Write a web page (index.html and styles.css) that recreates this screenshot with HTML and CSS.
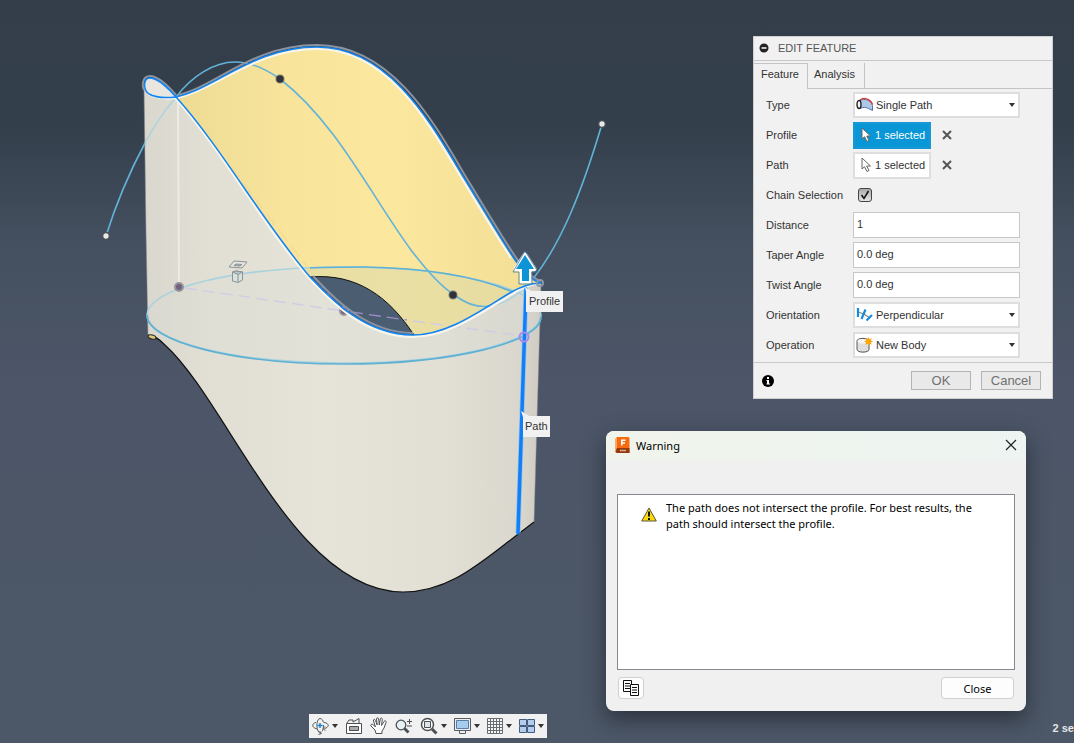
FILE: index.html
```html
<!DOCTYPE html>
<html lang="en">
<head>
    <meta charset="UTF-8">
    <meta name="viewport" content="width=device-width, initial-scale=1.0">
    <title>Edit Feature</title>
    <link rel="stylesheet" href="styles.css">
</head>
<body>
    <main class="viewport">
        <!-- Model canvas -->
        <div class="canvas">
            <svg class="model" width="640" height="620" viewBox="0 0 640 620" fill="none">
                <defs>
                    <linearGradient id="body-fill" gradientUnits="userSpaceOnUse" x1="144" y1="0" x2="541" y2="0">
                        <stop offset="0" stop-color="#dad7ce"/>
                        <stop offset="0.15" stop-color="#e1dfd4"/>
                        <stop offset="0.45" stop-color="#e6e4d8"/>
                        <stop offset="0.75" stop-color="#e2e0d4"/>
                        <stop offset="0.94" stop-color="#dad8ce"/>
                        <stop offset="1" stop-color="#d0cbc4"/>
                    </linearGradient>
                    <linearGradient id="inner-fill" gradientUnits="userSpaceOnUse" x1="177" y1="0" x2="535" y2="0">
                        <stop offset="0" stop-color="#eddb95"/>
                        <stop offset="0.3" stop-color="#f8e49b"/>
                        <stop offset="0.6" stop-color="#fce79e"/>
                        <stop offset="1" stop-color="#f2de94"/>
                    </linearGradient>
                    <clipPath id="inner-clip">
                        <path d="M176 97C217 88 254 47 317 47C391 47 433 127 464 178C480 204 500 238 513 257C521 270 532 281 541 283C533 283 521 286 508 294C477 313 446 335 413 335C363 335 327 295 310 277C262 221 222 148 176 97Z"/>
                    </clipPath>
                    <clipPath id="front-clip">
                        <path d="M144 84C145 96 164 100 176 97C222 148 262 221 310 277C327 295 363 335 413 335C446 335 477 313 508 294C521 286 533 283 541 283L534 522L517 535C480 561 449 592 403 592C297 592 228 402 165 345L148 335Z"/>
                    </clipPath>
                </defs>

                <path fill="url(#body-fill)" d="M144 84C145 96 164 100 176 97C222 148 262 221 310 277C327 295 363 335 413 335C446 335 477 313 508 294C521 286 533 283 541 283L534 522L517 535C480 563 449 592 403 592C295 592 228 402 165 345C159 339 155 336 148 335L146 230Z"/>
                <path fill="#e8e6de" d="M176 97C170 90 158 78 150 78C143 78 143 90 149 94C156 98 167 98 176 97Z"/>
                <path fill="url(#inner-fill)" d="M176 97C217 88 254 47 317 47C391 47 433 127 464 178C480 204 500 238 513 257C521 270 532 281 541 283C533 283 521 286 508 294C477 313 446 335 413 335C363 335 327 295 310 277C262 221 222 148 176 97Z"/>
                <g clip-path="url(#inner-clip)">
                    <ellipse cx="344" cy="315" rx="197" ry="48" fill="#dddba9" fill-opacity="0.6"/>
                    <path fill="#4b5d70" stroke="#111" d="M310 277C357 273 389 297 414 335C363 338 327 295 310 277Z"/>
                    <path stroke="#f3cc86" stroke-opacity="0.7" stroke-dasharray="14 6" d="M230 166L335 303"/>
                </g>
                <ellipse cx="344" cy="315" rx="197" ry="48" fill="#d8dbd6" fill-opacity="0.25" clip-path="url(#front-clip)"/>

                <!-- outer edges -->
                <path stroke="#8d9091" stroke-opacity="0.5" d="M144 90L146 230L148 335M541 286L534 522"/>
                <path stroke="#111" stroke-width="1.2" d="M148 335C155 336 159 339 165 345C228 402 295 592 403 592C449 592 480 563 517 535L534 522"/>
                <ellipse cx="152" cy="337" rx="4" ry="2" fill="#dccb76" stroke="#222" transform="rotate(15 152 337)"/>
                <path stroke="#ecebe4" stroke-width="2" d="M178 101L179 284"/>
                <path stroke="#ead9c9" stroke-opacity="0.6" stroke-dasharray="12 5" d="M365 330L517 530"/>

                <!-- sketch circle and spline -->
                <ellipse cx="344" cy="315" rx="197" ry="48" stroke="#a9d2df" stroke-width="1.6"/>
                <path stroke="#5fb0d2" stroke-width="1.7" d="M310 268C325 267 345 267 364 267C425 268 478 277 513 292M147 315C147 342 235 364 344 364C453 364 541 342 541 317"/>
                <path stroke="#63b3d9" stroke-width="1.6" d="M106 236C115 207 128 175 145 143M176 97C192 76 214 62 235 62C251 62 266 69 280 79C337 123 373 199 411 250C424 267 439 285 453 294C465 303 476 308 490 306M533 279C562 242 582 191 602 124"/>
                <path stroke="#afd3de" stroke-width="1.6" d="M145 143C155 124 166 109 176 97M490 306C506 304 520 294 533 279"/>
                <path stroke="#d2cae5" stroke-width="1.3" stroke-dasharray="12 6" d="M185 288L344 311M413 321L524 336"/>
                <path stroke="#9e8cc9" stroke-width="1.3" stroke-dasharray="12 6" d="M351 312L407 320"/>
                <g fill="#71647c" stroke="#97949c" stroke-width="2">
                    <circle cx="179" cy="287" r="4"/>
                    <circle cx="344" cy="311" r="4"/>
                </g>

                <!-- selected profile -->
                <path stroke="#8a93a0" stroke-width="2" d="M178 95C217 86 252 45 317 45C393 45 436 126 466 177C482 203 502 237 515 256C523 269 533 279 541 281M176 95C170 88 158 76 150 76C142 76 142 86 144 90M313 276C329 293 364 333 413 333"/>
                <path stroke="#f8f6ed" stroke-width="2" d="M177 98C218 89 255 49 317 49C390 49 431 128 462 179C478 205 498 239 511 258M148 94C157 99 167 99 175 98C221 149 260 222 309 278C326 296 361 337 413 337C447 337 478 315 509 296C521 288 532 284 537 284"/>
                <path stroke="#1285f5" stroke-width="1.5" d="M176 97C217 88 254 47 317 47C391 47 433 127 464 178C480 204 500 238 513 257C521 270 532 281 541 283C533 283 521 286 508 294C477 313 446 335 413 335C363 335 327 295 310 277C262 221 222 148 176 97C170 90 158 78 150 78C143 78 143 90 149 94C156 98 167 98 176 97Z"/>
                <circle cx="540" cy="283" r="3" stroke="#8798aa" stroke-width="2"/>

                <!-- selected path -->
                <path stroke="#9bc2e8" stroke-width="5" d="M526 290L518 533"/>
                <path stroke="#1180f8" stroke-width="3.5" stroke-linecap="round" d="M526 289L518 533"/>
                <circle cx="524" cy="337" r="4.5" stroke="#a78aeb" stroke-width="2"/>
                <path fill="#0d94d6" stroke="#fff" stroke-width="5" paint-order="stroke" stroke-linejoin="round" d="M525 255L534 269H529V281H522V269H516Z"/>
                <path stroke="#48789a" stroke-opacity="0.8" d="M525 251L538 272H532V284H519V272H513Z"/>

                <g stroke="#494e51" stroke-width="1.3">
                    <circle cx="106" cy="236" r="3.3" fill="#e7e9ea"/>
                    <circle cx="602" cy="124" r="3.3" fill="#e7e9ea"/>
                </g>
                <g fill="#303337" stroke="#777" stroke-opacity="0.6" stroke-width="1.4">
                    <circle cx="280" cy="79" r="4"/>
                    <circle cx="453" cy="295" r="4"/>
                </g>

                <!-- constraint glyphs -->
                <g stroke="#8c9394">
                    <path fill="#e6e6df" d="M234 261L247 262L242 268L229 267Z"/>
                    <path fill="#aebbc1" d="M236 264L242 264.500L240 266L234 265.500Z"/>
                    <path fill="#d9e1de" d="M232.500 272L236 271L242.500 272V280L238 282.500L232.500 281Z"/>
                    <path fill="#b0c9cf" d="M232.500 272L236 271L242.500 272L238 274.500ZM238 274.500V282"/>
                </g>
                <path fill="#f1f1f1" d="M525 287L533 292H526ZM521 411L531 417H523Z"/>
            </svg>
            <span class="tag tag-profile">Profile</span>
            <span class="tag tag-path">Path</span>
        </div>

        <!-- Edit feature panel -->
        <form class="panel">
            <header class="panel-header">
                <button type="button" class="icon-button" aria-label="Collapse">
                    <svg width="10" height="10" viewBox="0 0 10 10"><circle cx="5" cy="5" r="4.5" fill="#222"/><path d="M2.500 5H7.500" stroke="#fff" stroke-width="1.5"/></svg>
                </button>
                <h1>EDIT FEATURE</h1>
            </header>
            <nav class="tabs">
                <button type="button" class="tab active">Feature</button>
                <button type="button" class="tab">Analysis</button>
            </nav>
            <div class="fields">
                <div class="field">
                    <label for="type">Type</label>
                    <div class="combo">
                        <svg width="18" height="16" viewBox="0 0 18 16" fill="none">
                            <path d="M4 3.500C8 1 15 3 16.500 8.500V13.500L12.500 11.500C10 10 7 10 4 11.500Z" fill="#afc8ea" stroke="#5273aa"/>
                            <path d="M4 3C7 0.500 14 1 16.500 7.500" stroke="#d3433c" stroke-width="1.5"/>
                            <ellipse cx="3" cy="7.500" rx="2" ry="4" fill="#f3f3f3" stroke="#222" stroke-width="1.4"/>
                        </svg>
                        <select id="type"><option>Single Path</option></select>
                    </div>
                </div>
                <div class="field">
                    <span class="name">Profile</span>
                    <button type="button" class="pick selected">
                        <svg width="12" height="16" viewBox="0 0 12 16"><path d="M2 1L2 12L4.500 9.700L7 14.500L9 13.500L6.700 9H10.500Z" fill="#fff" stroke="#666"/></svg>
                        1 selected
                    </button>
                    <button type="button" class="icon-button clear" aria-label="Clear profile">
                        <svg width="10" height="10" viewBox="0 0 10 10"><path d="M1 1L9 9M9 1L1 9" stroke="#555" stroke-width="2"/></svg>
                    </button>
                </div>
                <div class="field">
                    <span class="name">Path</span>
                    <button type="button" class="pick">
                        <svg width="12" height="16" viewBox="0 0 12 16"><path d="M2 1L2 12L4.500 9.700L7 14.500L9 13.500L6.700 9H10.500Z" fill="#fff" stroke="#666"/></svg>
                        1 selected
                    </button>
                    <button type="button" class="icon-button clear" aria-label="Clear path">
                        <svg width="10" height="10" viewBox="0 0 10 10"><path d="M1 1L9 9M9 1L1 9" stroke="#555" stroke-width="2"/></svg>
                    </button>
                </div>
                <div class="field">
                    <label for="chain">Chain Selection</label>
                    <span class="check">
                        <input type="checkbox" id="chain" checked>
                        <svg width="14" height="14" viewBox="0 0 14 14"><path d="M3.500 7L6 10.500L10.500 3" fill="none" stroke="#111" stroke-width="1.5"/></svg>
                    </span>
                </div>
                <div class="field">
                    <label for="distance">Distance</label>
                    <input type="text" id="distance" value="1">
                </div>
                <div class="field">
                    <label for="taper">Taper Angle</label>
                    <input type="text" id="taper" value="0.0 deg">
                </div>
                <div class="field">
                    <label for="twist">Twist Angle</label>
                    <input type="text" id="twist" value="0.0 deg">
                </div>
                <div class="field">
                    <label for="orientation">Orientation</label>
                    <div class="combo">
                        <svg width="18" height="16" viewBox="0 0 18 16" fill="none">
                            <path d="M2 5L8 7L14 11" stroke="#888" stroke-width="1.3"/>
                            <path d="M2 1V10M9.500 2.500L5.500 12M16 8L10.500 13.500" stroke="#168be0" stroke-width="2.2"/>
                        </svg>
                        <select id="orientation"><option>Perpendicular</option></select>
                    </div>
                </div>
                <div class="field">
                    <label for="operation">Operation</label>
                    <div class="combo">
                        <svg width="18" height="16" viewBox="0 0 18 16">
                            <path d="M1 4C1 0.500 13 0.500 13 4V12.500C13 16 1 16 1 12.500Z" fill="#dedede" stroke="#555"/>
                            <ellipse cx="7" cy="4.200" rx="5.300" ry="2.300" fill="#f5f5f5"/>
                            <path d="M12.500 0L13.500 2.200L15.800 1.300L14.900 3.500L17 4.500L14.900 5.400L15.800 7.700L13.500 6.800L12.500 9L11.500 6.800L9.200 7.700L10.100 5.400L8 4.500L10.100 3.500L9.200 1.300L11.500 2.200Z" fill="#fca60e"/>
                        </svg>
                        <select id="operation"><option>New Body</option></select>
                    </div>
                </div>
            </div>
            <footer class="panel-footer">
                <button type="button" class="icon-button info" aria-label="Information">
                    <svg width="12" height="12" viewBox="0 0 12 12"><circle cx="6" cy="6" r="6" fill="#000"/><path d="M5 2H7V4H5ZM4.500 5H7V8.500H8V9.500H4.500V8.500H5V6H4.500Z" fill="#fff"/></svg>
                </button>
                <button type="button" class="action">OK</button>
                <button type="button" class="action">Cancel</button>
            </footer>
        </form>

        <!-- Warning dialog -->
        <section class="dialog" role="dialog" aria-labelledby="dialog-title">
            <header class="dialog-header">
                <svg width="15" height="16" viewBox="0 0 15 16">
                    <path d="M2 0H13.500L14.500 1V16H2L0.500 15V2Z" fill="#f76b10"/>
                    <path d="M0.500 2L2 0V11L0.500 14Z" fill="#ffa35c"/>
                    <path d="M2 11H14.500V16H2L0.500 15Z" fill="#933b0c"/>
                    <path d="M6.800 8.500V3.200H10.500M6.800 5.900H10" fill="none" stroke="#fff" stroke-width="1.5"/>
                    <path d="M5 13.500H11" stroke="#f0c9b0" stroke-width="1.5" stroke-dasharray="1.600 0.500"/>
                </svg>
                <h2 id="dialog-title">Warning</h2>
                <button type="button" class="icon-button" aria-label="Close dialog">
                    <svg width="12" height="12" viewBox="0 0 12 12"><path d="M1 1L11 11M11 1L1 11" stroke="#222" stroke-width="1.2"/></svg>
                </button>
            </header>
            <div class="message">
                <svg width="16" height="15" viewBox="0 0 16 15">
                    <path d="M8 1L15.300 14H0.700Z" fill="#fbd90c" stroke="#5b563b" stroke-linejoin="round"/>
                    <path d="M8 4.500V9.500M8 11V13" stroke="#111" stroke-width="2"/>
                </svg>
                <p>The path does not intersect the profile. For best results, the path should intersect the profile.</p>
            </div>
            <footer class="dialog-footer">
                <button type="button" class="copy" aria-label="Copy message">
                    <svg width="16" height="16" viewBox="0 0 16 16" fill="#fff" stroke="#111"><path d="M0.500 0.500H8.500V11.500H0.500ZM2 3.500H7M2 6H7M2 8.500H7"/><path d="M7.500 4.500H15.500V15.500H7.500ZM9 7.500H14M9 10H14M9 12.500H14"/></svg>
                </button>
                <button type="button" class="close">Close</button>
            </footer>
        </section>

        <!-- Navigation bar -->
        <div class="navbar">
            <button type="button" class="tool menu" aria-label="Orbit">
                <svg width="17" height="18" viewBox="0 0 17 18" fill="none" stroke="#555b60"><path d="M9 16.500C4 16 3.500 2 8 1.500C10 1.500 11 3.500 11.500 5.500M6.500 17.500L9.500 16.500L7.500 14"/><path d="M5 12C-1 10.500 0 6 4 5.500M12 5.500C17.500 6 17.500 10.500 12.500 11.500M13 9.500L11 11.700L13.500 13.500"/><path d="M11.500 8C11.500 11 11 13 10 14.500"/><path d="M8 6V11M5.500 8.500H10.500" stroke="#1680cf" stroke-width="1.4"/></svg>
            </button>
            <button type="button" class="tool" aria-label="Look at">
                <svg width="18" height="18" viewBox="0 0 18 18" fill="none" stroke="#4b5054"><path d="M1.500 6.500H16.500V16.500H1.500Z" fill="#fff"/><path d="M4.500 9.500H13.500V13.500H4.500Z" fill="#aaa"/><path d="M2 6L4 3H8V5L14 1.500V6"/></svg>
            </button>
            <button type="button" class="tool" aria-label="Pan">
                <svg width="18" height="18" viewBox="0 0 18 18" fill="#fff" stroke="#4b5054" stroke-linejoin="round"><path d="M6 16.500L5 13L1 9C0 7.500 2 6.500 3.500 8L5.500 10L3.500 4C3 2 5 2 5.500 3.500L7.200 8L6.500 2C6.500 0.500 8.500 0.500 8.700 2L9.300 8L10.300 2C10.800 0.500 12.500 1 12.300 2.500L11.500 8.500L14 4.500C15 3 16.500 4 16 5.500L14 11L12 14V16.500Z"/></svg>
            </button>
            <button type="button" class="tool" aria-label="Zoom">
                <svg width="18" height="18" viewBox="0 0 18 18" fill="none" stroke="#4b5054"><circle cx="6" cy="8" r="4.800" fill="#e6f2f3" stroke-width="1.3"/><path d="M9.500 11.500L13.500 15.500" stroke-width="3"/><path d="M14.500 2V7M12 4.500H17M12 9H17"/></svg>
            </button>
            <button type="button" class="tool menu" aria-label="Zoom window">
                <svg width="18" height="18" viewBox="0 0 18 18" fill="none" stroke="#4b5054"><circle cx="7.500" cy="7.500" r="6" fill="#fff" stroke-width="1.5"/><path d="M4.500 4.500H10.500V10.500H4.500Z" fill="#dce5e8"/><path d="M12 12L16.500 16.500" stroke-width="3"/></svg>
            </button>
            <button type="button" class="tool menu" aria-label="Display settings">
                <svg width="17" height="16" viewBox="0 0 17 16" stroke="#555d64"><path d="M0.500 0.500H16.500V12.500H0.500Z" fill="#eee"/><path d="M2.500 2.500H14.500V10.500H2.500Z" fill="#a7cbed" stroke="#587da6"/><path d="M5.500 12.500V15.500H11.500V12.500" fill="none"/></svg>
            </button>
            <button type="button" class="tool menu" aria-label="Grid and snaps">
                <svg width="16" height="16" viewBox="0 0 16 16"><path d="M0.500 0.500H15.500V15.500H0.500ZM3.500 0V16M6.500 0V16M9.500 0V16M12.500 0V16M0 3.500H16M0 6.500H16M0 9.500H16M0 12.500H16" fill="#f8f8f8" stroke="#676c70"/></svg>
            </button>
            <button type="button" class="tool menu" aria-label="Viewports">
                <svg width="16" height="14" viewBox="0 0 16 14" fill="#b1cdeb" stroke="#445b7d"><path d="M0.500 0.500H7.500V6.500H0.500ZM8.500 0.500H15.500V6.500H8.500ZM0.500 7.500H7.500V13.500H0.500ZM8.500 7.500H15.500V13.500H8.500Z"/></svg>
            </button>
        </div>
        <div class="status">2 se</div>
    </main>
</body>
</html>
```
FILE: styles.css
```css
* {
    box-sizing: border-box;
}
body {
    margin: 0;
    font-family: "Liberation Sans", Arial, sans-serif;
    font-size: 11px;
    color: #333;
}
button, input, select {
    font: inherit;
    color: inherit;
}
svg {
    display: block;
    flex: none;
}
h1, h2, p {
    margin: 0;
    font-weight: normal;
}
.viewport {
    position: relative;
    height: 100vh;
    overflow: hidden;
    background: linear-gradient(#343e4b 0%, #343f4c 17%, #444f5f 32%, #4c5668 52%, #4c5767 100%);
}

/* Canvas */
.canvas {
    position: absolute;
    top: 0;
    left: 0;
}
.tag {
    position: absolute;
    padding: 0 3px;
    line-height: 21px;
    background: #f1f1f1;
}
.tag-profile {
    left: 526px;
    top: 291px;
}
.tag-path {
    left: 523px;
    top: 416px;
    padding: 0 2px;
}

/* Panel */
.panel {
    position: absolute;
    top: 36px;
    right: 21px;
    width: 300px;
    background: #f1f1f1;
    border: 1px solid #cfcfcf;
}
.icon-button {
    display: flex;
    padding: 0;
    border: 0;
    background: none;
}
.panel-header {
    display: flex;
    align-items: center;
    gap: 9px;
    height: 24px;
    padding: 0 5px 1px;
    border-bottom: 1px solid #c8c8c8;
}
.panel-header h1 {
    font-size: 11px;
    color: #555;
}
.tabs {
    display: flex;
    height: 28px;
    padding-top: 2px;
    border-bottom: 1px solid #c4c4c4;
}
.tab {
    padding: 0 9px 3px 6px;
    background: #f1f1f1;
    border: 0;
    border-right: 1px solid #c4c4c4;
}
.tab.active {
    margin-bottom: -1px;
    padding: 0 8px 5px 7px;
    border-top: 1px solid #c4c4c4;
}
.fields {
    padding: 1px 32px 2px 12px;
}
.field {
    display: grid;
    grid-template-columns: 87px auto 1fr;
    align-items: center;
    height: 30px;
}
.combo, .field input[type="text"] {
    grid-column: 2 / 4;
    width: 100%;
    height: 26px;
    background: #fff;
    border: 1px solid #c8c8c8;
}
.combo {
    position: relative;
    display: flex;
    align-items: center;
    padding-left: 1px;
    border: 2px solid #dedede;
}
.combo select {
    flex: 1;
    height: 22px;
    padding: 0 2px;
    background: none;
    border: 0;
    appearance: none;
}
.combo::after {
    content: "";
    position: absolute;
    right: 3px;
    border: 3px solid transparent;
    border-top: 4px solid #333;
    border-bottom: 0;
    pointer-events: none;
}
.field input[type="text"] {
    padding: 0 3px 2px;
}
.pick {
    display: flex;
    align-items: center;
    gap: 3px;
    height: 27px;
    padding: 0 4px 0 5px;
    background: #fff;
    border: 2px solid #dedede;
}
.pick.selected {
    color: #fff;
    background: #0896d7;
    border-color: #1797d4;
}
.clear {
    margin-left: 11px;
}
.check {
    position: relative;
    width: 14px;
    margin-left: 5px;
}
.check input {
    display: block;
    width: 14px;
    height: 14px;
    margin: 0;
    appearance: none;
    background: linear-gradient(#aaa, #e6e6e6);
    border: 1px solid #444;
    border-radius: 3px;
}
.check svg {
    position: absolute;
    top: 0;
    left: 0;
    visibility: hidden;
    pointer-events: none;
}
.check input:checked + svg {
    visibility: visible;
}
.panel-footer {
    display: flex;
    align-items: center;
    gap: 10px;
    height: 36px;
    padding: 0 11px 0 8px;
    border-top: 1px solid #c8c8c8;
}
.info {
    margin-right: auto;
}
.action {
    width: 60px;
    height: 19px;
    padding: 0;
    font-size: 13px;
    line-height: 16px;
    color: #707070;
    background: #e9e9e9;
    border: 1px solid #b4b4b4;
}

/* Dialog */
.dialog {
    position: absolute;
    top: 431px;
    right: 48px;
    width: 420px;
    font-family: "Noto Sans", "Open Sans", sans-serif;
    font-size: 11px;
    color: #000;
    background: #f0f0f0;
    border-radius: 8px;
    box-shadow: 0 8px 22px rgba(20, 25, 32, 0.6);
}
.dialog-header {
    display: flex;
    align-items: center;
    gap: 6px;
    height: 30px;
    padding: 0 9px 2px;
    background: linear-gradient(90deg, #f0f4eb, #edf4f1);
    border-radius: 8px 8px 0 0;
}
.dialog-header h2 {
    flex: 1;
    font-size: 11px;
}
.message {
    display: flex;
    gap: 9px;
    height: 176px;
    margin: 33px 11px 7px;
    padding: 5px 24px 5px 23px;
    line-height: 16px;
    background: #fff;
    border: 1px solid #828790;
}
.message svg {
    margin-top: 7px;
}
.dialog-footer {
    display: flex;
    justify-content: space-between;
    padding: 0 12px 12px;
}
.copy, .close {
    display: flex;
    align-items: center;
    justify-content: center;
    width: 26px;
    height: 22px;
    padding: 0;
    background: #fdfdfd;
    border: 1px solid #d0d0d0;
    border-radius: 4px;
}
.close {
    width: 73px;
}

/* Navigation bar */
.navbar {
    position: absolute;
    left: 309px;
    bottom: 5px;
    display: flex;
    align-items: center;
    gap: 7px;
    height: 24px;
    padding: 0 3px;
    background: #f1f1f1;
}
.tool {
    display: flex;
    align-items: center;
    gap: 3px;
    padding: 0;
    background: none;
    border: 0;
}
.menu::after {
    content: "";
    border: 3px solid transparent;
    border-top: 4px solid #333;
    border-bottom: 0;
}
.status {
    position: absolute;
    right: 0;
    bottom: 9px;
    font-weight: bold;
    color: #e4e6e8;
}
```
